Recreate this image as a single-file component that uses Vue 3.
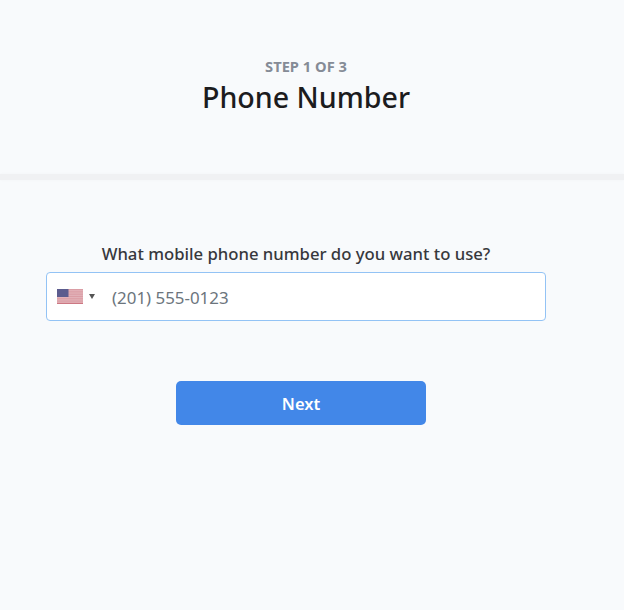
<template>
  <div class="page">
    <header class="head">
      <div class="step">STEP 1 OF 3</div>
      <h1>Phone Number</h1>
    </header>
    <div class="divider"></div>
    <div class="form">
      <label for="phone">What mobile phone number do you want to use?</label>
      <div class="phone-box">
        <div class="country">
          <svg class="flag" width="26" height="15" viewBox="0 0 26 15">
            <rect width="26" height="15" fill="#e3b3b9" />
            <rect v-for="y in stripes" :key="y" :y="y" width="26" height="1.15" fill="#da9da5" />
            <rect y="13.85" width="26" height="1.15" fill="#cc7883" />
            <rect width="11.5" height="8" fill="#5c5c8e" />
          </svg>
          <span class="arrow"></span>
        </div>
        <input id="phone" type="tel" placeholder="(201) 555-0123" />
      </div>
      <button class="next-btn">Next</button>
    </div>
  </div>
</template>

<script setup>
const stripes = [0, 2.3, 4.6, 6.9, 9.2, 11.5]
</script>

<style>
html,
body {
  background: #f8fafc;
}
</style>

<style scoped>
.page {
  min-height: 610px;
  background: #f8fafc;
  font-family: "Noto Sans", "Open Sans", sans-serif;
}

.head {
  height: 174px;
  box-sizing: border-box;
  padding-top: 56px;
  padding-right: 12px;
  text-align: center;
}

.step {
  font-size: 14.7px;
  line-height: 20px;
  font-weight: 700;
  color: #858b96;
}

h1 {
  margin: 0;
  padding-top: 2px;
  font-size: 28.6px;
  line-height: 38px;
  font-weight: 500;
  color: #1c1c1e;
}

.divider {
  height: 6px;
  background: #f0f1f3;
  box-shadow: 0 0 3px rgba(0, 0, 0, 0.03);
}

.form {
  width: 500px;
  margin-left: 46px;
  padding-top: 62px;
  display: flex;
  flex-direction: column;
  align-items: center;
}

label {
  font-size: 16.7px;
  line-height: 24px;
  font-weight: 500;
  color: #37383c;
  margin-bottom: 6px;
}

.phone-box {
  width: 100%;
  height: 49px;
  box-sizing: border-box;
  display: flex;
  align-items: center;
  background: #fff;
  border: 1px solid #93c3f5;
  border-radius: 4px;
}

.country {
  display: flex;
  align-items: center;
  padding-left: 10px;
  width: 65px;
  box-sizing: border-box;
  flex-shrink: 0;
}

.flag {
  display: block;
}

.arrow {
  margin-left: 6px;
  border-left: 3px solid transparent;
  border-right: 3px solid transparent;
  border-top: 5px solid #555;
}

input {
  flex: 1;
  min-width: 0;
  border: none;
  outline: none;
  background: transparent;
  font-family: inherit;
  font-size: 16.9px;
  color: #333;
  padding: 2px 0 0;
}

input::placeholder {
  color: #6c757d;
  opacity: 1;
}

.next-btn {
  width: 250px;
  height: 44px;
  margin-top: 60px;
  margin-left: 10px;
  background: #4287e8;
  color: #fff;
  border: none;
  border-radius: 5px;
  font-family: inherit;
  font-size: 16.5px;
  font-weight: 600;
  cursor: pointer;
}
</style>
